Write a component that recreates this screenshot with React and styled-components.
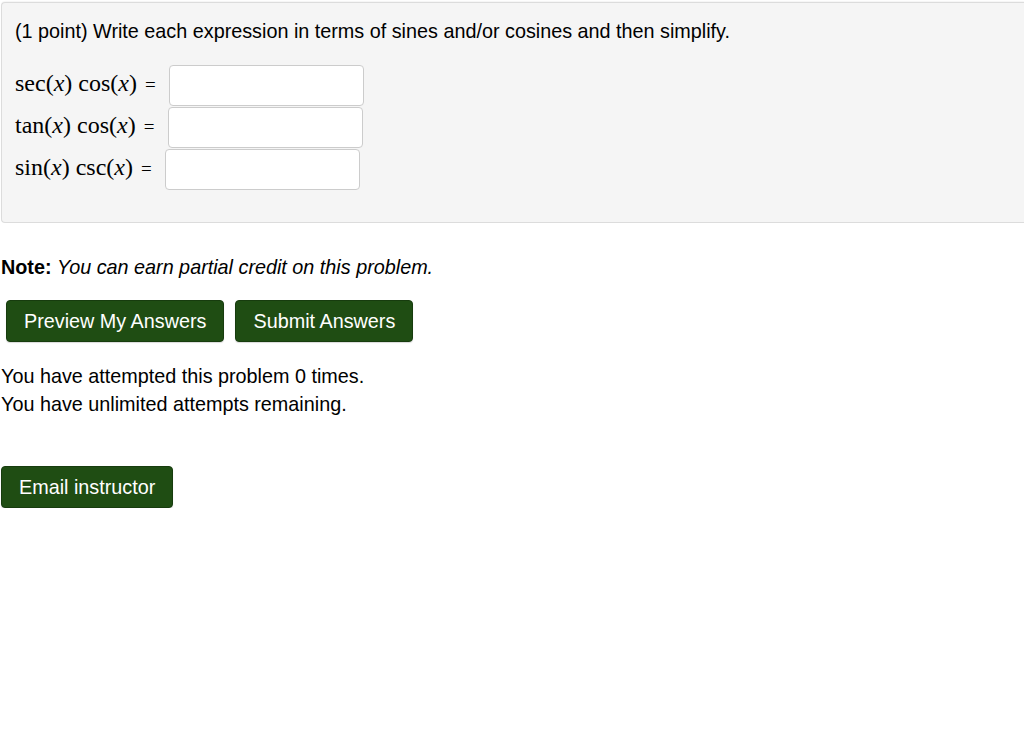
import React from 'react'
import styled, { createGlobalStyle } from 'styled-components'

const GlobalStyle = createGlobalStyle`
  body {
    margin: 0;
    background: #fff;
    font-family: "Liberation Sans", Arial, Helvetica, sans-serif;
    color: #000;
  }
`

const Page = styled.div`
  padding: 2px 0 0 1px;
`

const ProblemPanel = styled.div`
  background: #f5f5f5;
  border: 1px solid #dcdcdc;
  border-right: none;
  border-radius: 4px 0 0 4px;
  box-shadow: 0 -1px 1px rgba(0, 0, 0, 0.04);
  padding: 15px 13px 32px;
  height: 221px;
  box-sizing: border-box;
`

const Intro = styled.p`
  margin: 0 0 20px;
  font-size: 19.8px;
  line-height: 26px;
`

const MathRow = styled.div`
  display: flex;
  align-items: center;
  height: 42px;
`

const MathLabel = styled.span`
  font-family: "Liberation Serif", "Times New Roman", serif;
  font-size: 24px;
  padding-bottom: 4px;
  margin-right: ${p => p.gap}px;
  white-space: nowrap;
  i {
    font-style: italic;
  }
`

const Equals = styled.span`
  font-size: 19px;
  margin-left: 8px;
`

const AnswerInput = styled.input`
  width: 195px;
  height: 41px;
  box-sizing: border-box;
  border: 1px solid #ccc;
  border-radius: 4px;
  background: #fff;
  font-size: 16px;
  padding: 4px 8px;
`

const Note = styled.p`
  margin: 31px 0 0;
  font-size: 19.8px;
  line-height: 26px;
  em {
    font-style: italic;
  }
`

const ButtonRow = styled.div`
  display: flex;
  gap: 11px;
  margin: 20px 0 0 5px;
`

const GreenButton = styled.button`
  background: #1f4d13;
  color: #fff;
  border: 1px solid #173c0e;
  border-radius: 4px;
  font-family: "Liberation Sans", Arial, sans-serif;
  font-size: 19.8px;
  height: 42px;
  padding: 0 17px;
  box-shadow: 0 1px 1px rgba(0, 0, 0, 0.15);
  cursor: pointer;
`

const Attempts = styled.div`
  margin-top: 20px;
  font-size: 19.8px;
  line-height: 28px;
`

const EmailWrap = styled.div`
  margin-top: 48px;
`

const rows = [
  { fn1: 'sec', fn2: 'cos', gap: 13 },
  { fn1: 'tan', fn2: 'cos', gap: 14 },
  { fn1: 'sin', fn2: 'csc', gap: 13 },
]

export default function App() {
  return (
    <>
      <GlobalStyle />
      <Page>
        <ProblemPanel>
          <Intro>(1 point) Write each expression in terms of sines and/or cosines and then simplify.</Intro>
          {rows.map(r => (
            <MathRow key={r.fn1}>
              <MathLabel gap={r.gap}>
                {r.fn1}(<i>x</i>) {r.fn2}(<i>x</i>)<Equals>=</Equals>
              </MathLabel>
              <AnswerInput type="text" />
            </MathRow>
          ))}
        </ProblemPanel>
        <Note>
          <b>Note:</b> <em>You can earn partial credit on this problem.</em>
        </Note>
        <ButtonRow>
          <GreenButton>Preview My Answers</GreenButton>
          <GreenButton>Submit Answers</GreenButton>
        </ButtonRow>
        <Attempts>
          You have attempted this problem 0 times.<br />
          You have unlimited attempts remaining.
        </Attempts>
        <EmailWrap>
          <GreenButton>Email instructor</GreenButton>
        </EmailWrap>
      </Page>
    </>
  )
}
